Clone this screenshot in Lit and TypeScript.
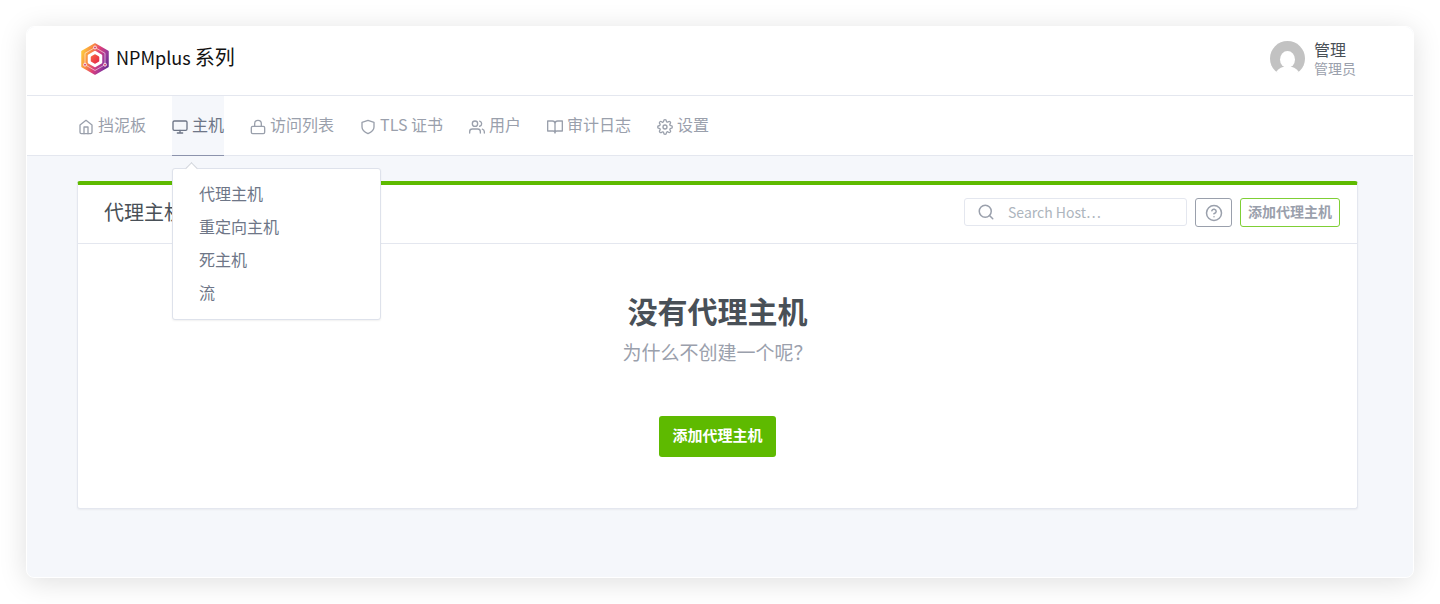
import { LitElement, html, css, svg } from "lit";
import { customElement, state } from "lit/decorators.js";

const icons = {
  home: svg`<path d="M3 9l9-7 9 7v11a2 2 0 0 1-2 2H5a2 2 0 0 1-2-2z"/><path d="M9 22V12h6v10"/>`,
  monitor: svg`<rect x="1.5" y="3" width="21" height="14" rx="2"/><path d="M8 21h8M12 17v4"/>`,
  lock: svg`<rect x="2" y="11" width="20" height="11" rx="2"/><path d="M7 11V7a5 5 0 0 1 10 0v4"/>`,
  shield: svg`<path d="M12 22s9-4 9-10V5l-9-3-9 3v7c0 6 9 10 9 10z"/>`,
  users: svg`<path d="M17 21v-2a4 4 0 0 0-4-4H5a4 4 0 0 0-4 4v2"/><circle cx="9" cy="7" r="4"/><path d="M23 21v-2a4 4 0 0 0-3-3.87M16 3.13a4 4 0 0 1 0 7.75"/>`,
  book: svg`<path d="M1 3h7a4 4 0 0 1 4 4v14a3 3 0 0 0-3-3H1zM23 3h-7a4 4 0 0 0-4 4v14a3 3 0 0 1 3-3h8z"/>`,
  settings: svg`<circle cx="12" cy="12" r="3"/><path d="M19.4 15a1.65 1.65 0 0 0 .33 1.82l.06.06a2 2 0 0 1-2.83 2.83l-.06-.06a1.65 1.65 0 0 0-1.82-.33 1.65 1.65 0 0 0-1 1.51V21a2 2 0 0 1-4 0v-.09A1.65 1.65 0 0 0 9 19.4a1.65 1.65 0 0 0-1.82.33l-.06.06a2 2 0 0 1-2.83-2.83l.06-.06a1.65 1.65 0 0 0 .33-1.82 1.65 1.65 0 0 0-1.51-1H3a2 2 0 0 1 0-4h.09A1.65 1.65 0 0 0 4.6 9a1.65 1.65 0 0 0-.33-1.82l-.06-.06a2 2 0 0 1 2.83-2.83l.06.06a1.65 1.65 0 0 0 1.82.33H9a1.65 1.65 0 0 0 1-1.51V3a2 2 0 0 1 4 0v.09a1.65 1.65 0 0 0 1 1.51 1.65 1.65 0 0 0 1.82-.33l.06-.06a2 2 0 0 1 2.83 2.83l-.06.06a1.65 1.65 0 0 0-.33 1.82V9a1.65 1.65 0 0 0 1.51 1H21a2 2 0 0 1 0 4h-.09a1.65 1.65 0 0 0-1.51 1z"/>`,
  search: svg`<circle cx="11" cy="11" r="8"/><path d="M21 21l-4.35-4.35"/>`,
  help: svg`<circle cx="12" cy="12" r="10"/><path d="M9.09 9a3 3 0 0 1 5.83 1c0 2-3 3-3 3M12 17h.01"/>`,
};

const icon = (name: keyof typeof icons) =>
  html`<svg class="icon" viewBox="0 0 24 24" aria-hidden="true">${icons[name]}</svg>`;

const logo = html`<svg class="logo" viewBox="0 0 30 32" aria-hidden="true">
  <defs>
    <linearGradient id="shell" x1="0" y1="0.3" x2="1" y2="0.7">
      <stop offset="0" stop-color="#fdc63a" />
      <stop offset="0.3" stop-color="#f98544" />
      <stop offset="0.55" stop-color="#dd3f78" />
      <stop offset="0.8" stop-color="#a0389a" />
      <stop offset="1" stop-color="#6a2c91" />
    </linearGradient>
    <linearGradient id="core" x1="0" y1="0" x2="1" y2="1">
      <stop offset="0" stop-color="#f7603f" />
      <stop offset="1" stop-color="#e62a4b" />
    </linearGradient>
  </defs>
  <path d="M15 1 28 8.500V23.500L15 31 2 23.500V8.500Z" fill="url(#shell)" stroke="url(#shell)" stroke-width="1.500" stroke-linejoin="round" />
  <path d="M15 4.500 25 10.300V21.700L15 27.500 5 21.700V10.300Z" fill="none" stroke="#fff" stroke-opacity=".55" stroke-width="1" />
  <path d="M15 9 21 12.500V19.500L15 23 9 19.500V12.500Z" fill="#fff" stroke="#fff" stroke-width="2.500" stroke-linejoin="round" />
  <path d="M15 12.500 18 14.250V17.750L15 19.500 12 17.750V14.250Z" fill="url(#core)" stroke="url(#core)" stroke-width="2.500" stroke-linejoin="round" />
  <g fill="#d8507a" stroke="#fff" stroke-opacity=".75" stroke-width="1">
    <circle cx="15" cy="4.500" r="1.500" />
    <circle cx="5" cy="21.700" r="1.500" />
    <circle cx="25" cy="21.700" r="1.500" />
  </g>
</svg>`;

type NavItem = { icon: keyof typeof icons; label: string; children?: string[] };

const navItems: NavItem[] = [
  { icon: "home", label: "挡泥板" },
  { icon: "monitor", label: "主机", children: ["代理主机", "重定向主机", "死主机", "流"] },
  { icon: "lock", label: "访问列表" },
  { icon: "shield", label: "TLS 证书" },
  { icon: "users", label: "用户" },
  { icon: "book", label: "审计日志" },
  { icon: "settings", label: "设置" },
];

@customElement("app-root")
export class AppRoot extends LitElement {
  @state() private open = "主机";

  static styles = css`
    :host {
      display: flex;
      box-sizing: border-box;
      min-height: 100vh;
      padding: 26px 26px 27px;
      background: #fff;
      color: #495057;
      font: 16px/24px "Noto Sans CJK SC", sans-serif;
    }
    * { box-sizing: border-box; }
    a { color: inherit; text-decoration: none; }
    h1, h2, p, ul { margin: 0; padding: 0; }
    ul { list-style: none; }
    button { font: inherit; cursor: pointer; }
    .icon {
      width: 16px;
      height: 16px;
      flex: none;
      fill: none;
      stroke: currentColor;
      stroke-width: 2;
      stroke-linecap: round;
      stroke-linejoin: round;
    }
    .window {
      flex: 1;
      display: flex;
      flex-direction: column;
      border: 1px solid #fff;
      border-radius: 8px;
      background: #f5f7fb;
      box-shadow: 0 4px 28px rgba(0, 0, 0, 0.13);
    }
    .header, .nav {
      background: #fff;
      border-bottom: 1px solid #e4e7ef;
      padding: 0 55px 0 51px;
    }
    .header {
      display: flex;
      justify-content: space-between;
      align-items: center;
      height: 69px;
      padding-bottom: 5px;
      border-radius: 8px 8px 0 0;
    }
    .brand {
      display: flex;
      align-items: center;
      gap: 6px;
      padding-left: 2px;
      color: #111;
    }
    .brand-text {
      padding-bottom: 4px;
      font-size: 18px;
    }
    .series { font-size: 20px; }
    .logo { width: 30px; height: 32px; }
    .account {
      display: flex;
      align-items: center;
      gap: 9px;
      padding-right: 2px;
    }
    .avatar { width: 35px; height: 35px; }
    .who { display: flex; flex-direction: column; line-height: 19px; }
    .role { font-size: 14px; color: #9aa0ac; }
    .tabs { display: flex; gap: 26px; }
    .tab { position: relative; margin-bottom: -1px; }
    .link {
      display: flex;
      align-items: center;
      gap: 4px;
      height: 60px;
      padding-top: 2px;
      color: #9aa0ac;
      border-bottom: 1px solid transparent;
    }
    .link span { padding-bottom: 6px; }
    .link.active {
      color: #6e7687;
      background: #f5f7fb;
      border-color: #8c93ac;
    }
    .menu {
      position: absolute;
      z-index: 2;
      top: 72px;
      left: 0;
      width: 209px;
      padding: 8px 0 10px;
      background: #fff;
      border: 1px solid #dee2eb;
      border-radius: 3px;
      box-shadow: 0 1px 2px rgba(0, 0, 0, 0.06);
    }
    .menu::before {
      content: "";
      position: absolute;
      top: -5px;
      left: 14px;
      width: 8px;
      height: 8px;
      background: #fff;
      border: solid #cfd3da;
      border-width: 1px 0 0 1px;
      transform: rotate(45deg);
    }
    .menu a {
      display: block;
      padding: 4px 26px 5px;
      color: #6e7687;
    }
    .content { padding: 25px 55px 68px 50px; flex: 1; display: flex; }
    .card {
      flex: 1;
      display: flex;
      flex-direction: column;
      background: #fff;
      border: 1px solid #e4e7ef;
      border-top: 4px solid #5eba00;
      border-radius: 3px;
      box-shadow: 0 1px 2px rgba(0, 0, 0, 0.05);
    }
    .card-head {
      display: flex;
      align-items: center;
      justify-content: space-between;
      height: 59px;
      padding: 0 17px 4px 26px;
      border-bottom: 1px solid #e4e7ef;
    }
    .title { font-size: 20px; font-weight: 400; }
    .tools { display: flex; align-items: flex-start; gap: 8px; }
    .search {
      display: flex;
      align-items: center;
      gap: 13px;
      width: 223px;
      height: 28px;
      padding: 0 12px;
      border: 1px solid #e4e7ef;
      border-radius: 3px;
      color: #9aa0ac;
    }
    .search input {
      flex: 1;
      min-width: 0;
      padding: 0;
      border: 0;
      outline: 0;
      background: none;
      font: inherit;
      font-size: 14px;
      color: #495057;
    }
    .search input::placeholder { color: #adb5bd; opacity: 1; }
    .search .icon, .help .icon { width: 18px; height: 18px; }
    .small {
      display: flex;
      align-items: center;
      justify-content: center;
      height: 29px;
      padding: 0 7px;
      background: #fff;
      border: 1px solid #9aa0ac;
      border-radius: 3px;
      color: #9aa0ac;
      font-size: 14px;
      font-weight: 700;
      line-height: 20px;
    }
    .help { width: 37px; padding-top: 2px; }
    .outline { padding-bottom: 2px; border-color: #7fcf35; }
    .empty {
      display: flex;
      flex-direction: column;
      align-items: center;
      padding: 44px 26px 51px;
    }
    .empty h1 { font-size: 30px; line-height: 44px; font-weight: 700; }
    .empty p { font-size: 19px; line-height: 40px; color: #9aa0ac; }
    .primary {
      height: 41px;
      margin-top: 44px;
      padding: 0 13px 3px;
      border: 0;
      border-radius: 3px;
      background: #5eba00;
      color: #fff;
      font-size: 15px;
      font-weight: 700;
    }
  `;

  private toggle(event: Event, item: NavItem) {
    event.preventDefault();
    this.open = item.children && this.open !== item.label ? item.label : "";
  }

  private renderTab(item: NavItem) {
    const active = item.label === "主机";
    return html`<li class="tab">
      <a class="link ${active ? "active" : ""}" href="#" @click=${(e: Event) => this.toggle(e, item)}>
        ${icon(item.icon)}<span>${item.label}</span>
      </a>
      ${item.children && this.open === item.label
        ? html`<ul class="menu">${item.children.map((c) => html`<li><a href="#">${c}</a></li>`)}</ul>`
        : ""}
    </li>`;
  }

  render() {
    return html`<div class="window">
      <header class="header">
        <a class="brand" href="#">${logo}<span class="brand-text">NPMplus <span class="series">系列</span></span></a>
        <a class="account" href="#">
          <svg class="avatar" viewBox="0 0 35 35" aria-hidden="true">
            <defs><clipPath id="round"><circle cx="17.500" cy="17.500" r="17.500" /></clipPath></defs>
            <g clip-path="url(#round)">
              <rect width="35" height="31.500" fill="#c2c2c2" />
              <ellipse cx="17.500" cy="18.500" rx="7.500" ry="8.500" fill="#fff" />
              <path d="M5 33c2-4 5-6.500 8-7h9c3 .5 6 3 8 7v3H5z" fill="#fff" />
            </g>
          </svg>
          <span class="who"><span>管理</span><span class="role">管理员</span></span>
        </a>
      </header>
      <nav class="nav"><ul class="tabs">${navItems.map((i) => this.renderTab(i))}</ul></nav>
      <main class="content">
        <section class="card">
          <div class="card-head">
            <h2 class="title">代理主机</h2>
            <div class="tools">
              <label class="search">${icon("search")}<input type="text" placeholder="Search Host…" aria-label="Search Host" /></label>
              <button class="small help" aria-label="Help">${icon("help")}</button>
              <button class="small outline">添加代理主机</button>
            </div>
          </div>
          <div class="empty">
            <h1>没有代理主机</h1>
            <p>为什么不创建一个呢？</p>
            <button class="primary">添加代理主机</button>
          </div>
        </section>
      </main>
    </div>`;
  }
}
